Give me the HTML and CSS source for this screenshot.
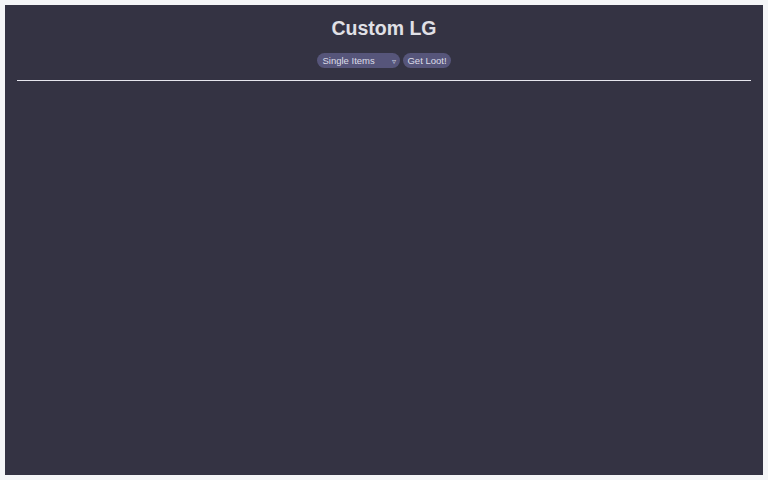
FILE: index.html
```html
<!DOCTYPE html>
<html lang="en">
  <head>
    <meta charset="utf-8" />
    <meta name="viewport" content="width=device-width, initial-scale=1" />
    <title>Custom LG</title>
    <link rel="stylesheet" href="styles.css">
  </head>
  <body>
    <main class="panel">
      <h1>Custom LG</h1>

      <form class="controls">
        <div class="select-wrap">
          <select class="pill">
            <option>Single Items</option>
            <option>Full Sets</option>
          </select>
        </div>
        <button class="pill loot" type="button">Get Loot!</button>
      </form>

      <hr />

      <div class="results"></div>
    </main>
  </body>
</html>
```

FILE: styles.css
```css
*,
*::before,
*::after {
  box-sizing: border-box;
  margin: 0;
}

html {
  background: #f4f5f7;
}

body {
  font-family: "Liberation Sans", Arial, sans-serif;
  margin: 5px;
}

.panel {
  background: #343343;
  color: #e0e0e6;
  height: 470px;
  padding: 12px 12px;
}

h1 {
  font-size: 19.5px;
  font-weight: bold;
  line-height: 23px;
  text-align: center;
}

.controls {
  align-items: center;
  display: flex;
  gap: 3px;
  justify-content: center;
  margin-top: 13px;
}

.pill {
  appearance: none;
  background: #56557a;
  border: none;
  border-radius: 8px;
  color: #dcdce8;
  display: block;
  font-family: inherit;
  font-size: 9.5px;
  height: 15px;
  line-height: 15px;
  padding: 0 5px;
}

.loot {
  padding: 0 4px;
}

.select-wrap {
  position: relative;
}

.select-wrap select {
  width: 83px;
}

.select-wrap::after {
  color: #cfcfe0;
  content: "\25BF";
  font-size: 8px;
  line-height: 8px;
  pointer-events: none;
  position: absolute;
  right: 4px;
  top: 5px;
}

hr {
  border: none;
  border-top: 1px solid #e6e6ee;
  margin-top: 12px;
}
```
